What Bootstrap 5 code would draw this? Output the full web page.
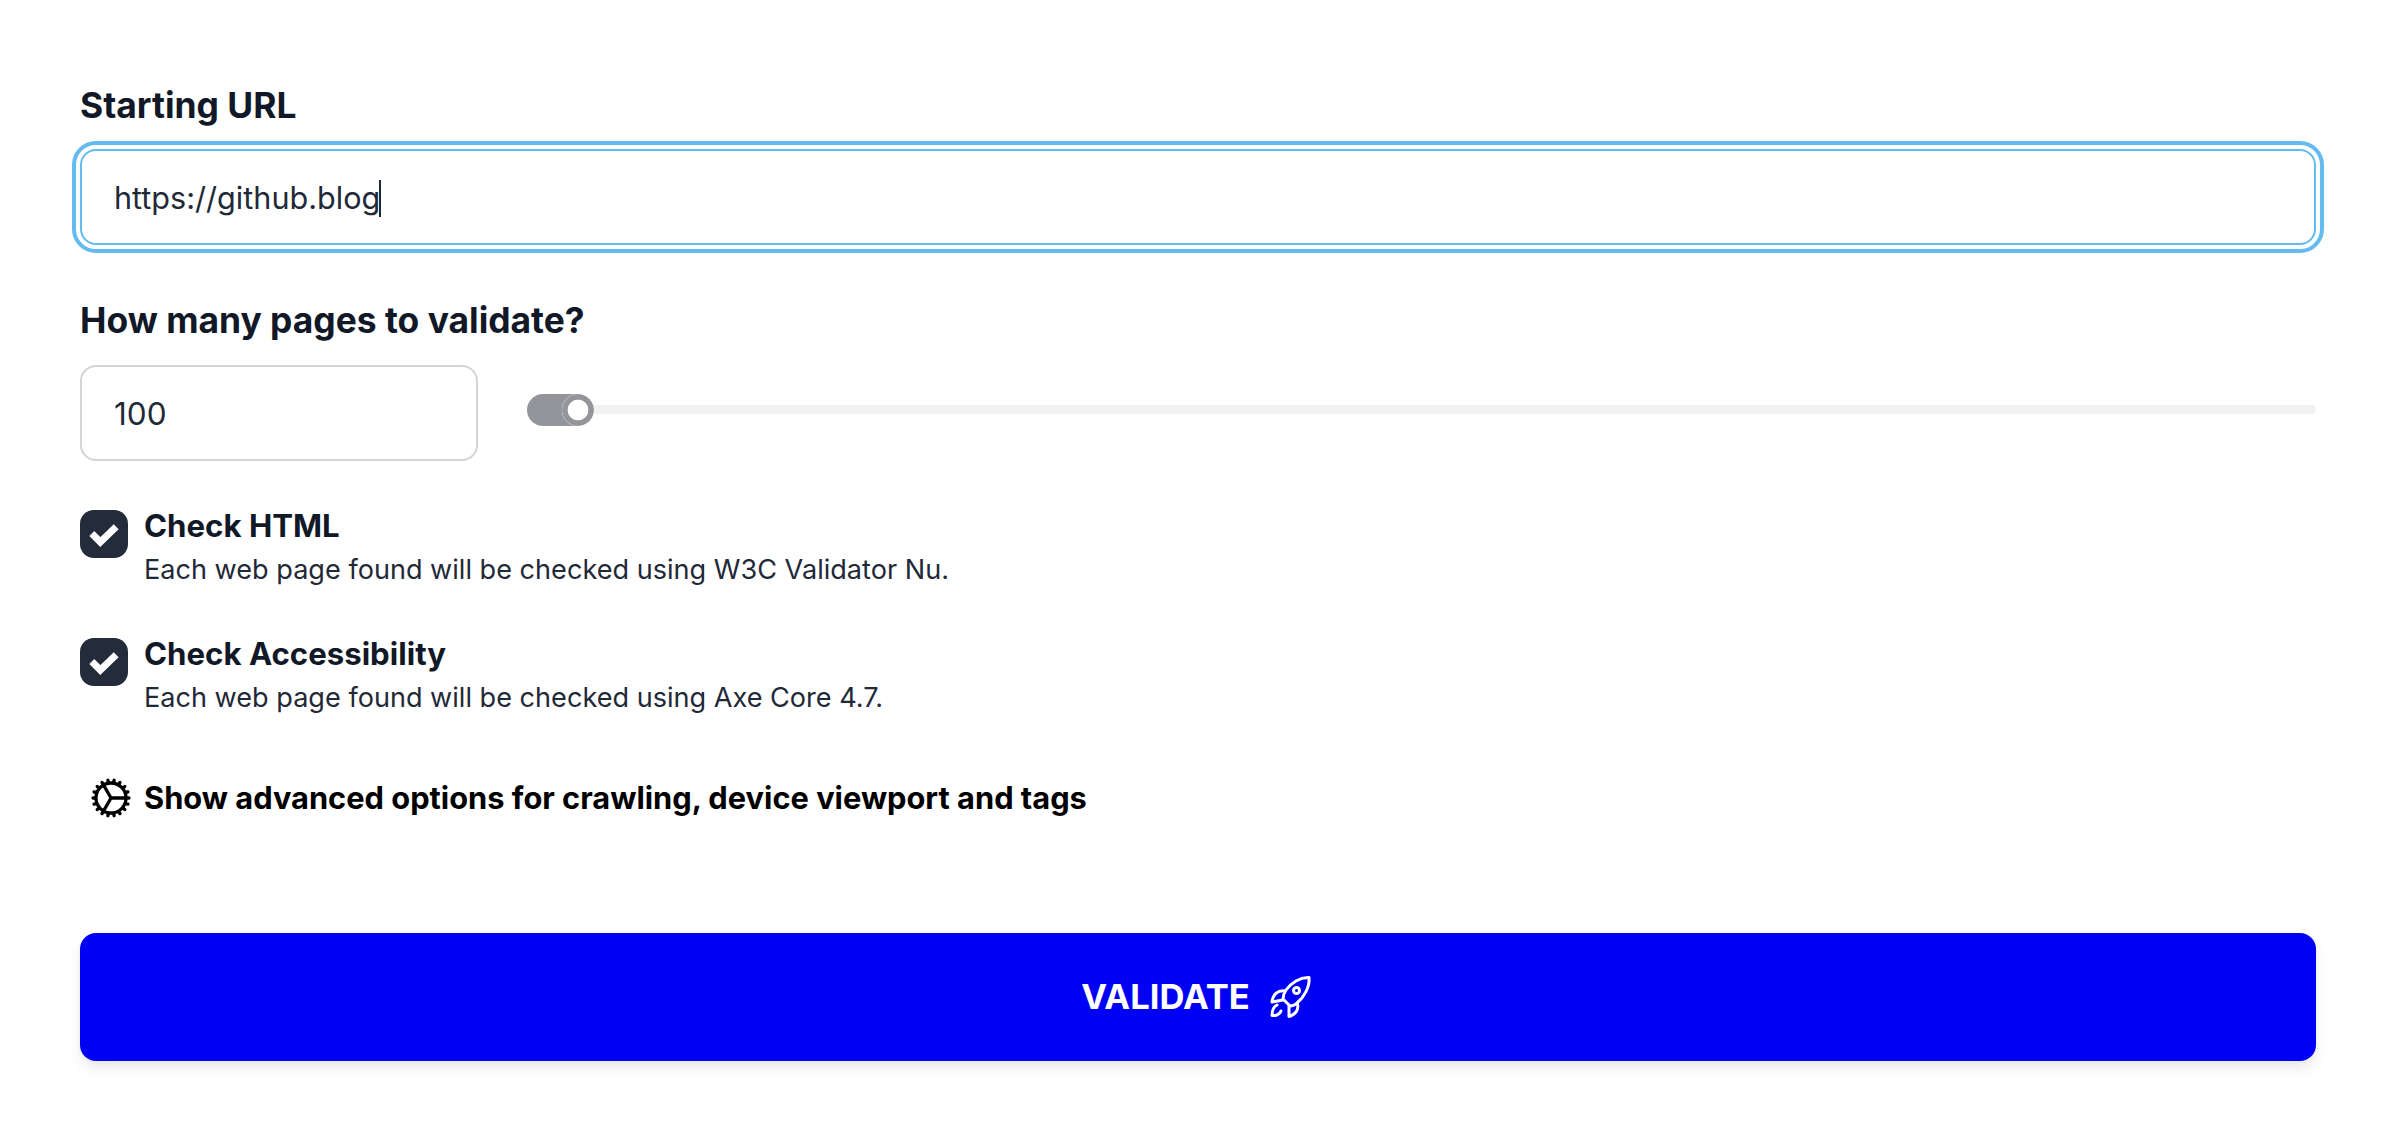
<!doctype html>
<html lang="en"><head><meta charset="utf-8"><title>Validate</title>
<link href="https://cdn.jsdelivr.net/npm/bootstrap@5.3.0/dist/css/bootstrap.min.css" rel="stylesheet">
<style>
body{background:#fff;font-family:Inter,"Liberation Sans",sans-serif;color:#111827}
.page-form{padding:82px 78px 60px 80px}
.fld-label{font-size:35.4px;font-weight:700;line-height:48px;margin:0;color:#111827;display:block}
.url-box.form-control{height:96px;border:2px solid #63bbf0;border-radius:16px;outline:4px solid #63bbf0;outline-offset:4px;font-size:30.6px;padding:2px 32px 0;color:#1f2937;display:flex;align-items:center;margin-top:19px;font-family:inherit}
.caret-bar{display:inline-block;width:2px;height:37px;background:#1f2937;margin-left:-1px}
.second-label{margin-top:52px}
.range-row{margin-top:20px;gap:49px}
.num-box.form-control{width:398px;height:96px;border:2px solid #d3d4d8;border-radius:16px;font-size:31.500px;padding:0 32px;color:#1f2937;flex:none;box-shadow:none;font-family:inherit}
.form-range.page-range{flex:1;width:auto;height:32px;margin-top:-7px;padding:0;background:transparent}
.form-range.page-range::-webkit-slider-runnable-track{height:9px;background:#f2f2f2;border-radius:5px;border:0}
.form-range.page-range::-webkit-slider-thumb{-webkit-appearance:none;appearance:none;width:67px;height:32px;margin-top:-11.5px;border:0;border-radius:16px;background-color:transparent;background-image:radial-gradient(circle at 51px 16px,#fff 10px,#93959b 10.7px,#93959b 15.4px,#c9cacd 16px,#93959b 16.6px);box-shadow:none}
.tick-box{width:48px;height:48px;border-radius:14px;background:#242b3a;flex:none;display:block}
.opt-row{gap:16px}
.first-opt{margin-top:49px}
.next-opt{margin-top:48px}
.opt-text{margin-top:-4px}
.opt-title{font-size:31.2px;font-weight:700;line-height:40px;color:#111827}
.opt-desc{font-size:27.1px;line-height:40px;color:#1f2937;margin-top:4px}
.adv-line{font-size:30.8px;font-weight:700;color:#000;line-height:48px;margin-top:56px}
.adv-icon{margin-left:7px;margin-right:9px;flex:none}
.go-wrap{margin-top:111px;border-radius:16px;box-shadow:0 8px 14px rgba(0,0,0,.07),0 3px 5px rgba(0,0,0,.03)}
.btn.go-btn{height:128px;width:100%;border:0;border-radius:16px;background:#0000f5;color:#fff;font-size:34.6px;font-weight:700;gap:14px}
</style></head>
<body>
<form class="page-form" onsubmit="return false">
  <label class="fld-label">Starting URL</label>
  <div class="form-control url-box"><span>https://github.blog</span><span class="caret-bar"></span></div>
  <label class="fld-label second-label" for="pages">How many pages to validate?</label>
  <div class="d-flex align-items-center range-row">
    <input id="pages" class="form-control num-box" type="text" value="100">
    <input class="form-range page-range" type="range" min="0" max="100" value="0" aria-label="Pages">
  </div>
  <div class="d-flex opt-row first-opt">
    <svg class="tick-box" viewBox="0 0 48 48" fill="none" stroke="#fff" stroke-width="7"><path d="M11.800 23.500L20.300 32L36.200 16.800"/></svg>
    <div class="opt-text"><div class="opt-title">Check HTML</div><div class="opt-desc">Each web page found will be checked using W3C Validator Nu.</div></div>
  </div>
  <div class="d-flex opt-row next-opt">
    <svg class="tick-box" viewBox="0 0 48 48" fill="none" stroke="#fff" stroke-width="7"><path d="M11.800 23.500L20.300 32L36.200 16.800"/></svg>
    <div class="opt-text"><div class="opt-title">Check Accessibility</div><div class="opt-desc">Each web page found will be checked using Axe Core 4.7.</div></div>
  </div>
  <div class="d-flex align-items-center adv-line">
    <svg class="adv-icon" width="48" height="48" viewBox="0 0 24 24" fill="none" stroke="#000" stroke-width="1.65" stroke-linecap="round" stroke-linejoin="round"><path d="M4.5 12a7.5 7.5 0 0 0 15 0m-15 0a7.5 7.5 0 1 1 15 0m-15 0H3m16.5 0H21m-1.5 0H12m-8.457 3.077 1.41-.513m14.095-5.13 1.41-.513M5.106 17.785l1.15-.964m11.49-9.642 1.149-.964M7.501 19.795l.75-1.3m7.5-12.99.75-1.3m-6.063 16.658.26-1.477m2.605-14.772.26-1.477m0 17.726-.26-1.477M10.698 4.614l-.26-1.477M16.5 19.794l-.75-1.299M7.5 4.205 12 12m6.894 5.785-1.149-.964M6.256 7.178l-1.15-.964m15.352 8.864-1.41-.513M4.954 9.435l-1.41-.514M12.002 12l-3.75 6.495"/></svg>
    <span>Show advanced options for crawling, device viewport and tags</span>
  </div>
  <div class="go-wrap">
    <button class="btn go-btn d-flex align-items-center justify-content-center" type="submit">VALIDATE
      <svg width="51" height="54" viewBox="0 0 51 54" fill="none" stroke="#fff" stroke-width="3" stroke-linecap="round" stroke-linejoin="round"><path d="M45 7.500C36 7 27 13 22 20C20 23 19 26 19 29L26 36C29 36 31 35 33 33C40 27 46 17 45 7.500Z"/><circle cx="32.500" cy="20.500" r="3"/><path d="M21 21C14 20 9 24 8 32L19 30"/><path d="M33.500 34C35 40 31 45 25 46.500L25 36"/><path d="M13 35C9 37 8 41 8 45.500C12 46 16 44 17 41"/></svg>
    </button>
  </div>
</form>
<script src="https://cdn.jsdelivr.net/npm/bootstrap@5.3.0/dist/js/bootstrap.bundle.min.js"></script>
</body></html>
